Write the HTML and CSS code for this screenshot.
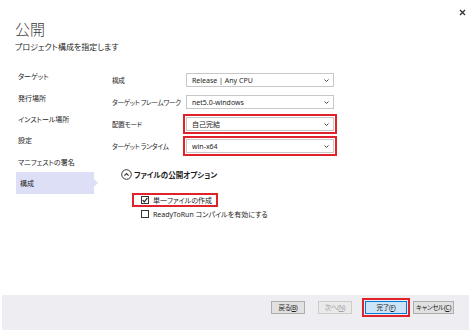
FILE: index.html
```html
<!DOCTYPE html>
<html lang="ja">

<head>
    <meta charset="UTF-8">
    <meta name="viewport" content="width=device-width, initial-scale=1.0">
    <title>公開</title>
    <link rel="stylesheet" href="styles.css">
</head>

<body>
    <div class="dialog">
        <header class="head">
            <h1 class="title">公開</h1>
            <p class="subtitle">プロジェクト構成を指定します</p>
            <button class="close" aria-label="閉じる">
                <svg width="7" height="7" viewBox="0 0 7 7">
                    <path d="M1 1 L6 6 M6 1 L1 6" stroke="#333" stroke-width="1.3" fill="none" />
                </svg>
            </button>
        </header>

        <div class="main">
            <nav class="nav">
                <div class="nav-item">ターゲット</div>
                <div class="nav-item">発行場所</div>
                <div class="nav-item">インストール場所</div>
                <div class="nav-item">設定</div>
                <div class="nav-item">マニフェストの署名</div>
                <div class="nav-item active">構成</div>
            </nav>

            <section class="form">
                <div class="row">
                    <span class="label">構成</span>
                    <div class="select">
                        <span>Release | Any CPU</span>
                        <svg class="caret" width="5" height="3" viewBox="0 0 5 3">
                            <path d="M0.5 0.5 L2.5 2.5 L4.5 0.5" stroke="#444" fill="none" />
                        </svg>
                    </div>
                </div>
                <div class="row">
                    <span class="label">ターゲット フレームワーク</span>
                    <div class="select">
                        <span>net5.0-windows</span>
                        <svg class="caret" width="5" height="3" viewBox="0 0 5 3">
                            <path d="M0.5 0.5 L2.5 2.5 L4.5 0.5" stroke="#444" fill="none" />
                        </svg>
                    </div>
                </div>
                <div class="row">
                    <span class="label">配置モード</span>
                    <div class="select mark">
                        <span>自己完結</span>
                        <svg class="caret" width="5" height="3" viewBox="0 0 5 3">
                            <path d="M0.5 0.5 L2.5 2.5 L4.5 0.5" stroke="#444" fill="none" />
                        </svg>
                    </div>
                </div>
                <div class="row">
                    <span class="label">ターゲット ランタイム</span>
                    <div class="select mark">
                        <span>win-x64</span>
                        <svg class="caret" width="5" height="3" viewBox="0 0 5 3">
                            <path d="M0.5 0.5 L2.5 2.5 L4.5 0.5" stroke="#444" fill="none" />
                        </svg>
                    </div>
                </div>

                <div class="options">
                    <svg width="11" height="11" viewBox="0 0 11 11">
                        <circle cx="5.5" cy="5.5" r="4.8" stroke="#333" stroke-width="1" fill="none" />
                        <path d="M3.4 6.6 L5.5 4.5 L7.6 6.6" stroke="#333" stroke-width="1.1" fill="none" />
                    </svg>
                    <span>ファイルの公開オプション</span>
                </div>

                <div class="check-list">
                    <div class="check marked">
                        <span class="box">
                            <svg width="6" height="6" viewBox="0 0 6 6">
                                <path d="M0.6 3.2 L2.3 4.9 L5.4 0.9" stroke="#222" stroke-width="1.2" fill="none" />
                            </svg>
                        </span>
                        <span>単一ファイルの作成</span>
                    </div>
                    <div class="check">
                        <span class="box"></span>
                        <span>ReadyToRun コンパイルを有効にする</span>
                    </div>
                </div>
            </section>
        </div>

        <footer class="foot">
            <button class="btn">戻る(<u>B</u>)</button>
            <button class="btn btn-disabled">次へ(<u>N</u>)</button>
            <button class="btn btn-primary">完了(<u>F</u>)</button>
            <button class="btn btn-cancel">キャンセル(<u>C</u>)</button>
        </footer>
    </div>
</body>

</html>
```

FILE: styles.css
```css
* {
    box-sizing: border-box;
}

body {
    margin: 0;
    background-color: #FFFFFF;
    font-family: "Noto Sans", "Noto Sans CJK JP", sans-serif;
    font-feature-settings: "palt";
    color: #1E1E1E;
}

.dialog {
    position: relative;
    width: 474px;
    height: 332px;
    display: flex;
    flex-direction: column;
}

.head {
    height: 52px;
    padding: 20px 0 0 15px;
}

.title {
    margin: 0;
    font-size: 15px;
    font-weight: 300;
    line-height: 18px;
    color: #3A3A3A;
}

.subtitle {
    margin: 4px 0 0;
    font-size: 8px;
    line-height: 10px;
}

.close {
    position: absolute;
    top: 9px;
    left: 459px;
    width: 7px;
    height: 7px;
    padding: 0;
    border: 0;
    background: none;
    display: flex;
}

.main {
    flex: 1;
    display: flex;
}

.nav {
    width: 112px;
    padding: 13.5px 0 0 16px;
}

.nav-item {
    position: relative;
    width: 78px;
    height: 21.4px;
    padding-left: 2px;
    display: flex;
    align-items: center;
    font-size: 7px;
    white-space: nowrap;
}

.nav-item.active {
    padding-left: 4px;
    background-color: #DCDFF5;
}

.nav-item.active::after {
    content: "";
    position: absolute;
    right: -4px;
    top: 50%;
    margin-top: -4px;
    border-left: 4px solid #DCDFF5;
    border-top: 4px solid transparent;
    border-bottom: 4px solid transparent;
}

.form {
    flex: 1;
    padding-top: 17px;
}

.row {
    height: 22px;
    display: flex;
    align-items: center;
}

.label {
    width: 74px;
    flex-shrink: 0;
    font-size: 6.6px;
    letter-spacing: -0.3px;
    white-space: nowrap;
}

.select {
    width: 148px;
    height: 14px;
    padding: 0 4px 0 5px;
    border: 1px solid #C8C8C8;
    display: flex;
    align-items: center;
    justify-content: space-between;
    font-size: 7px;
    white-space: nowrap;
}

.mark {
    outline: 2px solid #E0232B;
    outline-offset: 1px;
}

.options {
    height: 12px;
    margin-top: 11px;
    padding-left: 9px;
    display: flex;
    align-items: center;
    gap: 2px;
    font-size: 7.5px;
    font-weight: 700;
    white-space: nowrap;
}

.check-list {
    margin-top: 13px;
    padding-left: 20px;
}

.check {
    height: 14px;
    padding-left: 9px;
    display: flex;
    align-items: center;
    gap: 4px;
    font-size: 7px;
    white-space: nowrap;
}

.check.marked {
    width: 86px;
    outline: 2px solid #E0232B;
    outline-offset: -2px;
}

.box {
    width: 8px;
    height: 8px;
    border: 1px solid #333333;
    background-color: #FFFFFF;
    display: flex;
    align-items: center;
    justify-content: center;
}

.foot {
    height: 35px;
    margin: 0 5px 2px 2px;
    padding: 6px 15px 0 0;
    background-color: #EEEEF2;
    display: flex;
    justify-content: flex-end;
    align-items: flex-start;
}

.btn {
    width: 34px;
    height: 13px;
    padding: 0;
    border: 1px solid #ADADAD;
    background-color: #E1E1E1;
    font-family: inherit;
    font-feature-settings: "palt";
    font-size: 6.5px;
    line-height: 11px;
    letter-spacing: -0.3px;
    white-space: nowrap;
    color: #1E1E1E;
}

.btn + .btn {
    margin-left: 13px;
}

.btn-disabled {
    color: #A0A0A0;
    background-color: #EAEAEA;
    border-color: #CDCDCD;
}

.btn-primary {
    width: 42px;
    background-color: #CCE4F7;
    border-color: #0078D7;
    outline: 2px solid #E0232B;
    outline-offset: 1px;
}

.btn + .btn-cancel {
    width: 41px;
    margin-left: 6px;
}
```
